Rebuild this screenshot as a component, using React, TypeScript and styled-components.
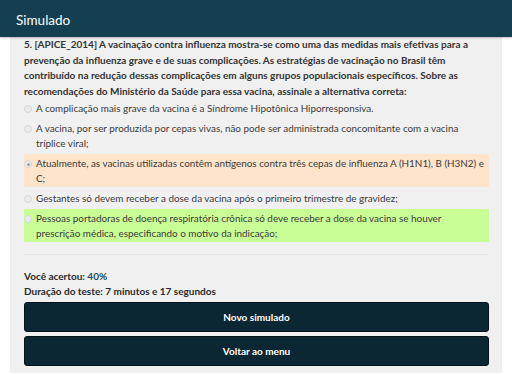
import React from "react";
import styled, { createGlobalStyle } from "styled-components";

const Global = createGlobalStyle`
  html, body { margin: 0; padding: 0; background: #ffffff; }
  body { font-family: Lato, "Open Sans", sans-serif; }
`;

const Page = styled.div`
  width: 512px;
  height: 374px;
  overflow: hidden;
  display: flex;
  flex-direction: column;
`;

const Header = styled.header`
  flex: 0 0 auto;
  height: 37px;
  box-sizing: border-box;
  background: #133f51;
  display: flex;
  align-items: center;
  padding: 3px 16px 0;
  color: #ffffff;
  font-size: 13.5px;
  box-shadow: 0 1px 2px rgba(0, 0, 0, 0.25);
  position: relative;
  z-index: 1;
`;

const Panel = styled.main`
  flex: 0 0 auto;
  margin: 0 10px;
  background: #f0f0f0;
  padding: 0 13px 7px 14px;
  display: flex;
  flex-direction: column;
`;

const Question = styled.p`
  margin: 0;
  font-size: 10px;
  line-height: 15.6px;
  font-weight: 700;
  color: #333333;
`;

const Options = styled.div`
  display: flex;
  flex-direction: column;
  gap: 1.5px;
  margin-top: 0;
`;

const Option = styled.label<{ $tone?: "wrong" | "right" }>`
  display: flex;
  align-items: flex-start;
  gap: 4px;
  padding: 2px 1px 2px 0;
  background: ${(p) =>
    p.$tone === "wrong" ? "#fde4cb" : p.$tone === "right" ? "#c9fd96" : "transparent"};
  font-size: 9.9px;
  line-height: 14.6px;
  color: #3a3a3a;
`;

const Radio = styled.span<{ $checked?: boolean }>`
  flex: 0 0 auto;
  box-sizing: border-box;
  width: 8px;
  height: 8px;
  margin: 4px 0 0 0;
  border-radius: 50%;
  border: 1px solid #d8d8d8;
  background: #ebebeb;
  display: flex;
  align-items: center;
  justify-content: center;
  &::after {
    content: "";
    width: 3px;
    height: 3px;
    border-radius: 50%;
    background: ${(p) => (p.$checked ? "#a0a0a0" : "transparent")};
  }
`;

const Divider = styled.hr`
  border: none;
  border-top: 1px solid #e6e6e6;
  margin: 12px 0 0;
`;

const Result = styled.div`
  margin-top: 14px;
  font-size: 10px;
  line-height: 15px;
  font-weight: 700;
  color: #2a2a2a;
`;

const Score = styled.span`
  color: #1c4a5c;
`;

const Buttons = styled.div`
  display: flex;
  flex-direction: column;
  gap: 4px;
  margin-top: 3px;
`;

const Button = styled.button`
  height: 30px;
  border: 1px solid #04141b;
  border-radius: 3px;
  background: #0b2733;
  color: #ffffff;
  font-family: Lato, sans-serif;
  font-size: 10px;
  font-weight: 700;
  cursor: pointer;
`;

const options: { text: string; tone?: "wrong" | "right"; checked?: boolean }[] = [
  { text: "A complicação mais grave da vacina é a Síndrome Hipotônica Hiporresponsiva." },
  {
    text: "A vacina, por ser produzida por cepas vivas, não pode ser administrada concomitante com a vacina tríplice viral;",
  },
  {
    text: "Atualmente, as vacinas utilizadas contêm antígenos contra três cepas de influenza A (H1N1), B (H3N2) e C;",
    tone: "wrong",
    checked: true,
  },
  { text: "Gestantes só devem receber a dose da vacina após o primeiro trimestre de gravidez;" },
  {
    text: "Pessoas portadoras de doença respiratória crônica só deve receber a dose da vacina se houver prescrição médica, especificando o motivo da indicação;",
    tone: "right",
  },
];

export default function App() {
  return (
    <Page>
      <Global />
      <Header>Simulado</Header>
      <Panel>
        <Question>
          5. [APICE_2014] A vacinação contra influenza mostra-se como uma das medidas mais efetivas para a
          prevenção da influenza grave e de suas complicações. As estratégias de vacinação no Brasil têm
          contribuído na redução dessas complicações em alguns grupos populacionais específicos. Sobre as
          recomendações do Ministério da Saúde para essa vacina, assinale a alternativa correta:
        </Question>
        <Options>
          {options.map((o, i) => (
            <Option key={i} $tone={o.tone}>
              <Radio $checked={o.checked} />
              <span>{o.text}</span>
            </Option>
          ))}
        </Options>
        <Divider />
        <Result>
          Você acertou: <Score>40%</Score>
          <br />
          Duração do teste: 7 minutos e 17 segundos
        </Result>
        <Buttons>
          <Button>Novo simulado</Button>
          <Button>Voltar ao menu</Button>
        </Buttons>
      </Panel>
    </Page>
  );
}
